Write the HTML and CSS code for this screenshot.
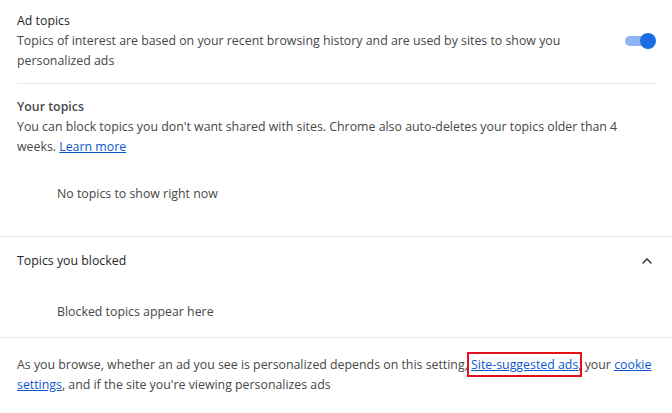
FILE: index.html
```html
<!DOCTYPE html>
<html lang="en">
<head>
<meta charset="utf-8">
<title>Ad topics</title>
<link rel="stylesheet" href="styles.css">
</head>
<body>
<div class="page">
  <section class="row toggle-row">
    <div class="text">
      <div class="title">Ad topics</div>
      <div class="desc">Topics of interest are based on your recent browsing history and are used by sites to show you personalized ads</div>
    </div>
    <div class="toggle" role="switch" aria-checked="true"><span class="track"></span><span class="knob"></span></div>
  </section>
  <section class="block your-topics">
    <div class="title strong">Your topics</div>
    <div class="desc">You can block topics you don't want shared with sites. Chrome also auto-deletes your topics older than 4 weeks. <a href="#" class="link">Learn more</a></div>
    <div class="empty first">No topics to show right now</div>
  </section>
  <section class="block blocked">
    <div class="expand-row">
      <div class="title">Topics you blocked</div>
      <svg class="chevron" width="12" height="8" viewBox="0 0 12 8"><path d="M1.5 6.5 L6 2 L10.5 6.5" fill="none" stroke="#474747" stroke-width="1.6"/></svg>
    </div>
    <div class="empty second">Blocked topics appear here</div>
  </section>
  <section class="block footer">
    <div class="desc">As you browse, whether an ad you see is personalized depends on this setting, <a href="#" class="link marked">Site-suggested ads</a>, your <a href="#" class="link">cookie settings</a>, and if the site you're viewing personalizes ads</div>
  </section>
</div>
</body>
</html>
```
FILE: styles.css
```css
html, body {
  margin: 0;
  padding: 0;
  background: #ffffff;
}
body {
  font-family: "Open Sans", "Noto Sans", sans-serif;
  font-size: 12.35px;
  line-height: 20px;
  color: #1f1f1f;
}
.page {
  width: 672px;
}
.row {
  display: flex;
  align-items: center;
  margin: 0 16px 0 17px;
  padding: 11px 0 12px;
  border-bottom: 1px solid #e9e9e9;
}
.toggle-row .text {
  flex: 1;
  padding-right: 40px;
}
.title {
  color: #1f1f1f;
}
.title.strong {
  font-weight: 600;
  color: #4a4a4a;
}
.desc {
  color: #474747;
}
.link {
  color: #0b57d0;
  text-decoration: underline;
}
.toggle {
  position: relative;
  width: 31px;
  height: 16px;
  flex: none;
}
.track {
  position: absolute;
  left: 0;
  top: 3px;
  width: 26px;
  height: 10px;
  border-radius: 5px;
  background: #8fb4f5;
}
.knob {
  position: absolute;
  right: 0;
  top: 0;
  width: 16px;
  height: 16px;
  border-radius: 50%;
  background: #1a6ee3;
}
.block {
  padding: 0 16px 0 17px;
}
.your-topics {
  padding-top: 13px;
  padding-bottom: 32px;
  border-bottom: 1px solid #e9e9e9;
}
.empty {
  padding-left: 40px;
  color: #474747;
}
.empty.first {
  margin-top: 27px;
}
.blocked {
  padding-top: 14px;
  padding-bottom: 15px;
  border-bottom: 1px solid #e9e9e9;
}
.expand-row {
  display: flex;
  align-items: center;
  justify-content: space-between;
}
.chevron {
  margin-right: 3px;
}
.empty.second {
  margin-top: 31px;
}
.footer {
  padding-top: 17px;
}
.marked {
  outline: 2px solid #e3121f;
  outline-offset: 2px;
}
```
